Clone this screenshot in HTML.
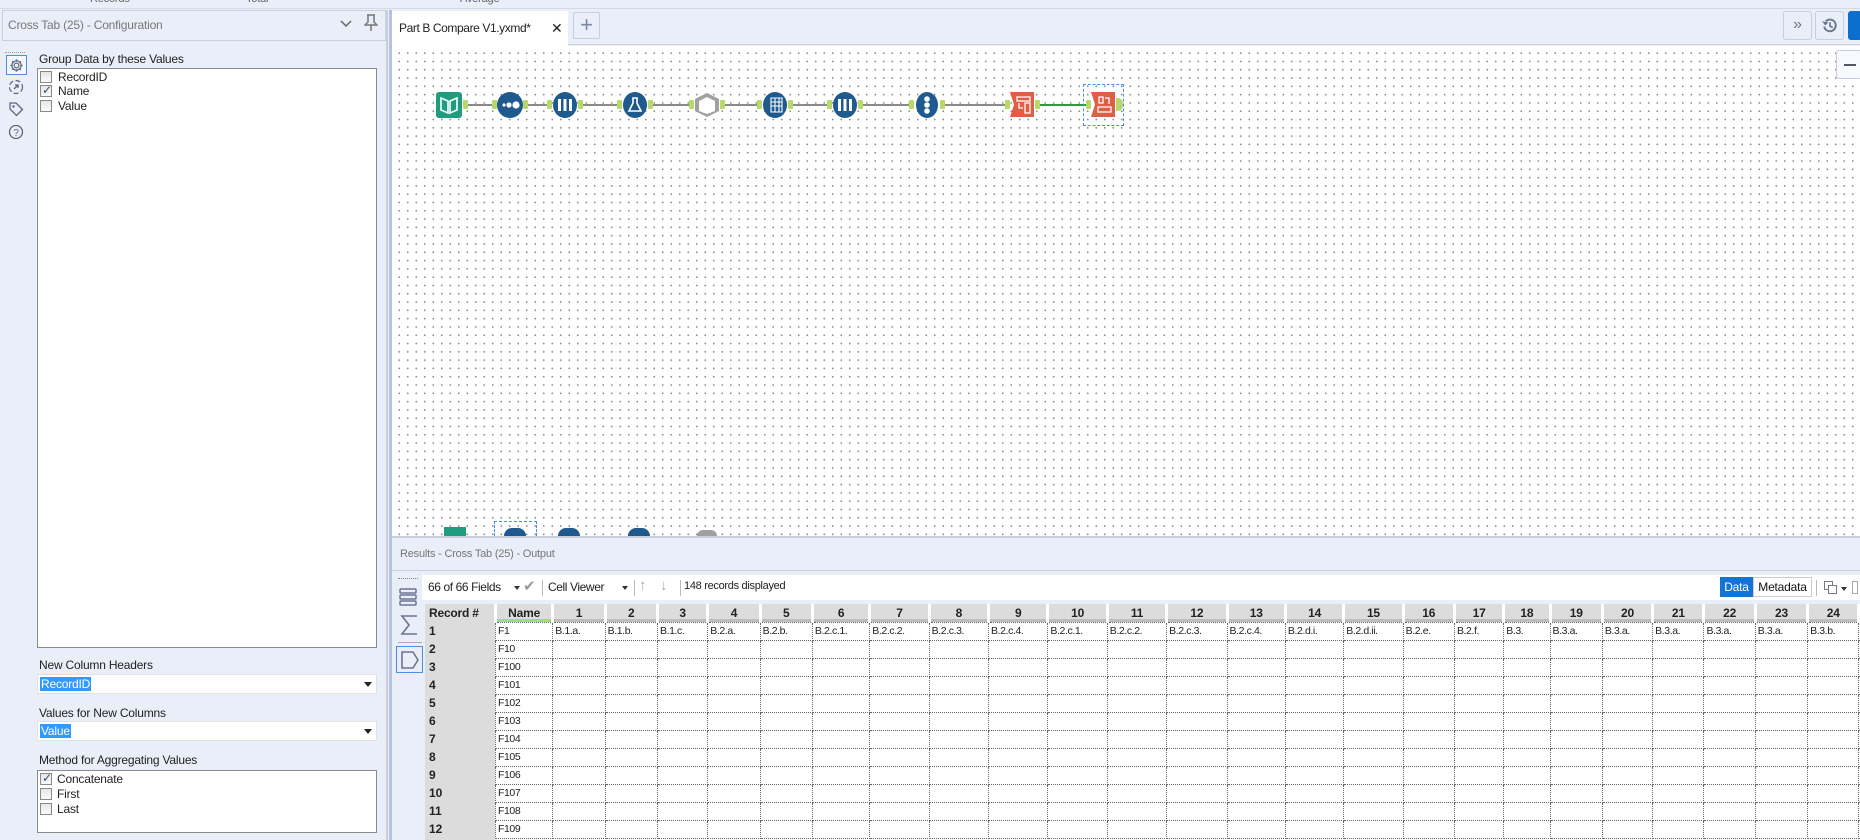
<!DOCTYPE html>
<html><head><meta charset="utf-8">
<style>
*{box-sizing:border-box;margin:0;padding:0}
body{width:1860px;height:840px;overflow:hidden;background:#eaeef8;font-family:"Liberation Sans",sans-serif;color:#222;position:relative;letter-spacing:-0.2px}
.abs{position:absolute}
.t{font-size:12px;white-space:nowrap}
.cb{position:absolute;width:12px;height:12px;border:1px solid #8a8a8a;background:linear-gradient(#e6e6e6,#fafafa)}
.cb.on::after{content:"✓";position:absolute;left:1px;top:-3px;font-size:12px;color:#3a4a8a}
.canvas{left:392px;top:46px;width:1468px;height:490px;background-color:#fff;background-image:radial-gradient(circle,#8c8c8c 0.7px,transparent 1.1px);background-size:8.5px 8.3px;background-position:3px 3px}
.tool{position:absolute;width:26px;height:26px}
.port{position:absolute;width:5px;height:9px;background:#b8d86a;border-radius:1px}
.line{position:absolute;height:2px;background:#8a8a8a}
table{border-collapse:collapse;table-layout:fixed;font-size:11px}
td{height:18px;border:1px dotted #666;padding:0 2px;white-space:nowrap;overflow:hidden;font-size:10.5px;letter-spacing:-0.4px}
th{height:18px;background:#dcdcdc;border-left:3px solid #fff;font-size:12px;font-weight:bold;box-shadow:inset 0 -3px 0 #bdbdbd;text-align:center}
th.nm{box-shadow:inset 0 -3px 0 #9fdc7a}
td.rn{background:#dcdcdc;border:none;font-weight:bold;font-size:12px;padding-left:4px;letter-spacing:0}
</style></head><body>
<!-- top strip -->
<div class="abs t" style="left:90px;top:-7px;color:#666;font-size:11px">Records</div>
<div class="abs t" style="left:246px;top:-7px;color:#666;font-size:11px">Total</div>
<div class="abs t" style="left:460px;top:-7px;color:#666;font-size:11px">Average</div>
<div class="abs" style="left:0;top:8px;width:1860px;height:1px;background:#d4d8e2"></div>

<!-- left panel -->
<div class="abs" style="left:2px;top:10px;width:384px;height:31px;border:1px solid #c9cfdc;background:#eaeef8"></div>
<div class="abs t" style="left:8px;top:18px;color:#777;font-size:12px">Cross Tab (25) - Configuration</div>
<svg class="abs" style="left:340px;top:19px" width="12" height="10"><path d="M1 2 L6 7 L11 2" fill="none" stroke="#666" stroke-width="1.5"/></svg>
<svg class="abs" style="left:364px;top:14px" width="14" height="18"><path d="M3 1H11M4 1V8L1 11H13L10 8V1M7 11V17" fill="none" stroke="#777" stroke-width="1.5"/></svg>
<div class="abs" style="left:386px;top:10px;width:2px;height:830px;background:#c9cfdc"></div>
<div class="abs" style="left:389px;top:10px;width:3px;height:830px;background:#b6c2e2"></div>
<!-- left icons -->
<div class="abs" style="left:5px;top:52px;width:20px;height:1px;border-top:1px dotted #999"></div>
<div class="abs" style="left:6px;top:55px;width:21px;height:20px;border:1px solid #4a90e2;background:#f4f7fd"></div>
<svg class="abs" style="left:9px;top:58px" width="15" height="15" viewBox="0 0 16 16"><circle cx="8" cy="8" r="2.5" fill="none" stroke="#5a6580" stroke-width="1.3"/><path d="M8 1.5V4M8 12V14.5M1.5 8H4M12 8H14.5M3.4 3.4L5.2 5.2M10.8 10.8L12.6 12.6M3.4 12.6L5.2 10.8M10.8 5.2L12.6 3.4" stroke="#5a6580" stroke-width="1.5"/><circle cx="8" cy="8" r="5" fill="none" stroke="#5a6580" stroke-width="1.2"/></svg>
<svg class="abs" style="left:8px;top:79px" width="16" height="16" viewBox="0 0 16 16"><circle cx="8" cy="8" r="6.5" fill="none" stroke="#5a6580" stroke-width="1.2" stroke-dasharray="5 2.5"/><path d="M6 10L10 6M7 6H10V9" fill="none" stroke="#5a6580" stroke-width="1.3"/></svg>
<svg class="abs" style="left:8px;top:101px" width="16" height="16" viewBox="0 0 16 16"><path d="M2 2H8L14.5 8.5L8.5 14.5L2 8Z" fill="none" stroke="#5a6580" stroke-width="1.3"/><circle cx="5.5" cy="5.5" r="1.2" fill="#5a6580"/></svg>
<svg class="abs" style="left:8px;top:124px" width="16" height="16" viewBox="0 0 16 16"><circle cx="8" cy="8" r="6.5" fill="none" stroke="#5a6580" stroke-width="1.3"/><text x="8" y="12" font-size="10" text-anchor="middle" fill="#5a6580" font-family="Liberation Sans">?</text></svg>

<div class="abs t" style="left:39px;top:52px">Group Data by these Values</div>
<div class="abs" style="left:37px;top:68px;width:340px;height:580px;border:1px solid #8a8a8a;background:#fff"></div>
<div class="cb" style="left:40px;top:71px"></div><div class="abs t" style="left:58px;top:70px">RecordID</div>
<div class="cb on" style="left:40px;top:85px"></div><div class="abs t" style="left:58px;top:84px">Name</div>
<div class="cb" style="left:40px;top:100px"></div><div class="abs t" style="left:58px;top:99px">Value</div>

<div class="abs t" style="left:39px;top:658px">New Column Headers</div>
<div class="abs" style="left:37px;top:674px;width:340px;height:20px;background:#fff;border:1px solid #e2e2e2"></div>
<div class="abs t" style="left:40px;top:677px;background:#3399ff;color:#fff;padding:0 1px">RecordID</div>
<div class="abs" style="left:364px;top:682px;border-left:4px solid transparent;border-right:4px solid transparent;border-top:5px solid #222"></div>
<div class="abs t" style="left:39px;top:706px">Values for New Columns</div>
<div class="abs" style="left:37px;top:721px;width:340px;height:20px;background:#fff;border:1px solid #e2e2e2"></div>
<div class="abs t" style="left:40px;top:724px;background:#3399ff;color:#fff;padding:0 1px">Value</div>
<div class="abs" style="left:364px;top:729px;border-left:4px solid transparent;border-right:4px solid transparent;border-top:5px solid #222"></div>
<div class="abs t" style="left:39px;top:753px">Method for Aggregating Values</div>
<div class="abs" style="left:37px;top:770px;width:340px;height:63px;border:1px solid #8a8a8a;background:#fff"></div>
<div class="cb on" style="left:40px;top:773px"></div><div class="abs t" style="left:57px;top:772px">Concatenate</div>
<div class="cb" style="left:40px;top:788px"></div><div class="abs t" style="left:57px;top:787px">First</div>
<div class="cb" style="left:40px;top:803px"></div><div class="abs t" style="left:57px;top:802px">Last</div>

<!-- tab bar -->
<div class="abs" style="left:392px;top:10px;width:1468px;height:35px;background:#eaeef8;border-bottom:1px solid #c9cfdc"></div>
<div class="abs" style="left:392px;top:11px;width:176px;height:35px;background:#fff"></div>
<div class="abs t" style="left:399px;top:21px;font-size:12px;letter-spacing:-0.4px">Part B Compare V1.yxmd*</div>
<div class="abs t" style="left:551px;top:20px;font-size:14px">✕</div>
<div class="abs" style="left:573px;top:12px;width:27px;height:27px;border:1px solid #c6cde0;border-radius:2px;text-align:center;color:#7a86a6;font-size:22px;line-height:24px">+</div>
<div class="abs" style="left:1783px;top:11px;width:29px;height:29px;border:1px solid #c6cde0;border-radius:3px;text-align:center;color:#6a7590;font-size:16px;line-height:26px">»</div>
<div class="abs" style="left:1815px;top:11px;width:29px;height:29px;border:1px solid #c6cde0;border-radius:3px"></div>
<svg class="abs" style="left:1821px;top:17px" width="17" height="17" viewBox="0 0 16 16"><path d="M3 9A5.5 5.5 0 1 0 4.5 4" fill="none" stroke="#6a7590" stroke-width="1.8"/><path d="M1 4L4 8L7 5" fill="#6a7590"/><path d="M8.5 5V8.5L11 10" fill="none" stroke="#6a7590" stroke-width="1.6"/></svg>
<div class="abs" style="left:1848px;top:11px;width:14px;height:29px;background:#0b6fd0;border-radius:3px"></div>

<!-- canvas -->
<div class="abs canvas"></div>
<div class="abs" style="left:1836px;top:50px;width:26px;height:29px;border:1px solid #c6cde0;border-radius:3px;background:#f7f9fd"></div>
<div class="abs" style="left:1844px;top:64px;width:12px;height:2px;background:#556"></div>

<!-- connections -->
<div class="line" style="left:468px;top:104px;width:32px"></div>
<div class="line" style="left:523px;top:104px;width:28px"></div>
<div class="line" style="left:580px;top:104px;width:42px"></div>
<div class="line" style="left:648px;top:104px;width:46px"></div>
<div class="line" style="left:720px;top:104px;width:42px"></div>
<div class="line" style="left:788px;top:104px;width:44px"></div>
<div class="line" style="left:858px;top:104px;width:56px"></div>
<div class="line" style="left:940px;top:104px;width:70px"></div>
<div class="line" style="left:1038px;top:104px;width:52px;background:#2e9a3c;height:2px"></div>

<!-- tools -->
<svg class="tool" style="left:436px;top:92px" viewBox="0 0 26 26"><rect width="26" height="26" rx="3" fill="#1f9d7e"/><path d="M5 6L12 9V21L5 18Z M21 6L14 9V21L21 18Z" fill="none" stroke="#fff" stroke-width="1.6"/></svg>
<svg class="tool" style="left:497px;top:92px" viewBox="0 0 26 26"><circle cx="13" cy="13" r="13" fill="#1e5a8e"/><circle cx="7" cy="13" r="1.6" fill="#fff"/><circle cx="12" cy="13" r="2.6" fill="#fff"/><circle cx="19" cy="13" r="3.6" fill="#fff"/></svg>
<svg class="tool" style="left:552px;top:92px" viewBox="0 0 26 26"><ellipse cx="13" cy="13" rx="12" ry="13" fill="#1e5a8e"/><rect x="6" y="7" width="3" height="12" fill="#fff"/><rect x="11.5" y="7" width="3" height="12" fill="#fff"/><rect x="17" y="7" width="3" height="12" fill="#fff"/></svg>
<svg class="tool" style="left:622px;top:92px" viewBox="0 0 26 26"><ellipse cx="13" cy="13" rx="12" ry="13" fill="#1e5a8e"/><path d="M11 6V11L7 19H19L15 11V6Z" fill="none" stroke="#fff" stroke-width="1.6"/></svg>
<svg class="tool" style="left:694px;top:92px" viewBox="0 0 26 26"><path d="M13 1L25 7V19L13 25L1 19V7Z" fill="#a0a0a0"/><path d="M13 5L21 9V19L13 22L5 19V9Z" fill="#fff"/></svg>
<svg class="tool" style="left:762px;top:92px" viewBox="0 0 26 26"><ellipse cx="13" cy="13" rx="12" ry="13" fill="#1e5a8e"/><path d="M9 6H20V20H9Z M9 10H20M9 14H20M13 6V20M17 6V20" fill="none" stroke="#fff" stroke-width="1.1"/></svg>
<svg class="tool" style="left:832px;top:92px" viewBox="0 0 26 26"><ellipse cx="13" cy="13" rx="12" ry="13" fill="#1e5a8e"/><rect x="6" y="7" width="3" height="12" fill="#fff"/><rect x="11.5" y="7" width="3" height="12" fill="#fff"/><rect x="17" y="7" width="3" height="12" fill="#fff"/></svg>
<svg class="tool" style="left:914px;top:92px" viewBox="0 0 26 26"><ellipse cx="13" cy="13" rx="11" ry="13" fill="#1e5a8e"/><circle cx="13" cy="7" r="2.8" fill="#fff"/><circle cx="13" cy="13" r="2.8" fill="#fff"/><circle cx="13" cy="19" r="2.8" fill="#fff"/></svg>
<svg class="tool" style="left:1010px;top:92px;width:24px;height:25px" viewBox="0 0 24 25"><path d="M0 0H24V25H0L4 12.5Z" fill="#df5f46"/><path d="M7 5H20V9H7ZM15 11H20V21H15ZM9 11V16H13" fill="none" stroke="#fff" stroke-width="1.3"/></svg>
<div class="abs" style="left:1083px;top:84px;width:41px;height:42px;border:1px dashed #4a90e2"></div>
<svg class="tool" style="left:1091px;top:92px;width:24px;height:25px" viewBox="0 0 24 25"><path d="M0 0H24V25H0L4 12.5Z" fill="#df5f46"/><path d="M8 5H12V11H8ZM14 6H18V12M7 15H20V20H7Z" fill="none" stroke="#fff" stroke-width="1.3"/></svg>
<!-- ports -->
<div class="port" style="left:463px;top:100px"></div><div class="port" style="left:492px;top:100px"></div>
<div class="port" style="left:523px;top:100px"></div><div class="port" style="left:547px;top:100px"></div>
<div class="port" style="left:578px;top:100px"></div><div class="port" style="left:617px;top:100px"></div>
<div class="port" style="left:648px;top:100px"></div><div class="port" style="left:689px;top:100px"></div>
<div class="port" style="left:720px;top:100px"></div><div class="port" style="left:757px;top:100px"></div>
<div class="port" style="left:788px;top:100px"></div><div class="port" style="left:827px;top:100px"></div>
<div class="port" style="left:858px;top:100px"></div><div class="port" style="left:909px;top:100px"></div>
<div class="port" style="left:940px;top:100px"></div><div class="port" style="left:1005px;top:100px"></div>
<div class="port" style="left:1035px;top:100px"></div><div class="port" style="left:1086px;top:100px"></div>
<div class="port" style="left:1116px;top:98px;width:7px;height:13px;border-radius:0 5px 5px 0"></div>
<!-- bottom cut tools -->
<div class="abs" style="left:444px;top:527px;width:22px;height:9px;background:#1f9d7e"></div>
<div class="abs" style="left:494px;top:521px;width:43px;height:15px;border:1px dashed #4a90e2;border-bottom:none"></div>
<div class="abs" style="left:504px;top:528px;width:22px;height:16px;border-radius:11px;background:#1e5a8e"></div>
<div class="abs" style="left:558px;top:528px;width:22px;height:16px;border-radius:11px;background:#1e5a8e"></div>
<div class="abs" style="left:628px;top:528px;width:22px;height:16px;border-radius:11px;background:#1e5a8e"></div>
<div class="abs" style="left:697px;top:530px;width:20px;height:12px;border-radius:10px;background:#a0a0a0"></div>

<!-- results panel -->
<div class="abs" style="left:392px;top:536px;width:1468px;height:304px;background:#eaeef8;border-top:2px solid #c9cfdc"></div>
<div class="abs" style="left:392px;top:538px;width:1468px;height:33px;border-bottom:1px solid #c9cfdc"></div>
<div class="abs t" style="left:400px;top:548px;color:#777;font-size:11px">Results - Cross Tab (25) - Output</div>
<div class="abs" style="left:422px;top:575px;width:1438px;height:25px;background:#fff"></div>
<div class="abs t" style="left:428px;top:580px;font-size:12px;letter-spacing:-0.4px">66 of 66 Fields</div>
<div class="abs" style="left:514px;top:586px;border-left:3px solid transparent;border-right:3px solid transparent;border-top:4px solid #333"></div>
<div class="abs t" style="left:523px;top:577px;font-size:15px;color:#999">✔</div>
<div class="abs" style="left:542px;top:580px;width:1px;height:16px;background:#bbb"></div>
<div class="abs t" style="left:548px;top:580px;font-size:12px;letter-spacing:-0.4px">Cell Viewer</div>
<div class="abs" style="left:622px;top:586px;border-left:3px solid transparent;border-right:3px solid transparent;border-top:4px solid #333"></div>
<div class="abs" style="left:634px;top:580px;width:1px;height:16px;background:#bbb"></div>
<div class="abs t" style="left:639px;top:577px;font-size:15px;color:#aaa">↑</div>
<div class="abs t" style="left:660px;top:577px;font-size:15px;color:#aaa">↓</div>
<div class="abs" style="left:680px;top:580px;width:1px;height:16px;background:#bbb"></div>
<div class="abs t" style="left:684px;top:580px;font-size:11px;letter-spacing:-0.3px">148 records displayed</div>
<div class="abs t" style="left:1720px;top:577px;width:33px;height:20px;background:#1474d4;color:#fff;font-size:12px;text-align:center;line-height:20px">Data</div>
<div class="abs t" style="left:1753px;top:577px;width:59px;height:20px;border:1px solid #ccd;color:#111;font-size:12px;text-align:center;line-height:18px">Metadata</div>
<div class="abs" style="left:1816px;top:580px;width:1px;height:16px;background:#bbb"></div>
<div class="abs" style="left:1824px;top:581px;width:9px;height:9px;border:1.5px solid #778"></div>
<div class="abs" style="left:1828px;top:585px;width:9px;height:9px;border:1.5px solid #778;background:#fff"></div>
<div class="abs" style="left:1841px;top:587px;border-left:3px solid transparent;border-right:3px solid transparent;border-top:4px solid #333"></div>
<div class="abs" style="left:1852px;top:581px;width:6px;height:13px;border:1.5px solid #aaa"></div>
<!-- side mini icons -->
<div class="abs" style="left:398px;top:578px;width:20px;border-top:1px dotted #888"></div>
<svg class="abs" style="left:399px;top:588px" width="18" height="18"><rect x="1" y="1" width="16" height="4" rx="1" fill="none" stroke="#6a7590" stroke-width="1.5"/><rect x="1" y="7" width="16" height="4" rx="1" fill="none" stroke="#6a7590" stroke-width="1.5"/><rect x="1" y="13" width="16" height="4" rx="1" fill="none" stroke="#6a7590" stroke-width="1.5"/></svg>
<svg class="abs" style="left:400px;top:615px" width="18" height="20"><path d="M17 1H2L9 10L2 19H17" fill="none" stroke="#6a7590" stroke-width="1.6"/></svg>
<div class="abs" style="left:398px;top:642px;width:24px;border-top:1px solid #aab"></div>
<div class="abs" style="left:396px;top:646px;width:27px;height:27px;border:1px solid #4a90e2"></div>
<svg class="abs" style="left:400px;top:650px" width="20" height="20"><path d="M2 2H13L18 10L13 18H2Z" fill="none" stroke="#6a7590" stroke-width="1.6"/></svg>

<!-- grid -->
<div class="abs" style="left:425px;top:604px;width:1435px;height:236px;background:#fff"></div>
<div class="abs" style="left:425px;top:604px;width:70px;height:236px;background:#dcdcdc"></div>
<table class="abs" style="left:425px;top:604px;width:1490px">
<colgroup><col style="width:70px"><col style="width:57px"><col style="width:52px"><col style="width:52px"><col style="width:50px"><col style="width:52px"><col style="width:52px"><col style="width:57px"><col style="width:59px"><col style="width:59px"><col style="width:59px"><col style="width:59px"><col style="width:59px"><col style="width:60px"><col style="width:58px"><col style="width:58px"><col style="width:59px"><col style="width:51px"><col style="width:49px"><col style="width:46px"><col style="width:52px"><col style="width:50px"><col style="width:51px"><col style="width:51px"><col style="width:52px"><col style="width:51px"><col style="width:55px"></colgroup>
<tr><th style="background:#dcdcdc;box-shadow:none;border:none;text-align:left;padding-left:4px">Record #</th><th class="nm">Name</th><th>1</th><th>2</th><th>3</th><th>4</th><th>5</th><th>6</th><th>7</th><th>8</th><th>9</th><th>10</th><th>11</th><th>12</th><th>13</th><th>14</th><th>15</th><th>16</th><th>17</th><th>18</th><th>19</th><th>20</th><th>21</th><th>22</th><th>23</th><th>24</th><th>25</th></tr>
<tr><td class="rn">1</td><td>F1</td><td>B.1.a.</td><td>B.1.b.</td><td>B.1.c.</td><td>B.2.a.</td><td>B.2.b.</td><td>B.2.c.1.</td><td>B.2.c.2.</td><td>B.2.c.3.</td><td>B.2.c.4.</td><td>B.2.c.1.</td><td>B.2.c.2.</td><td>B.2.c.3.</td><td>B.2.c.4.</td><td>B.2.d.i.</td><td>B.2.d.ii.</td><td>B.2.e.</td><td>B.2.f.</td><td>B.3.</td><td>B.3.a.</td><td>B.3.a.</td><td>B.3.a.</td><td>B.3.a.</td><td>B.3.a.</td><td>B.3.b.</td><td>B.3.b.</td></tr>
<tr><td class="rn">2</td><td>F10</td><td></td><td></td><td></td><td></td><td></td><td></td><td></td><td></td><td></td><td></td><td></td><td></td><td></td><td></td><td></td><td></td><td></td><td></td><td></td><td></td><td></td><td></td><td></td><td></td><td></td></tr>
<tr><td class="rn">3</td><td>F100</td><td></td><td></td><td></td><td></td><td></td><td></td><td></td><td></td><td></td><td></td><td></td><td></td><td></td><td></td><td></td><td></td><td></td><td></td><td></td><td></td><td></td><td></td><td></td><td></td><td></td></tr>
<tr><td class="rn">4</td><td>F101</td><td></td><td></td><td></td><td></td><td></td><td></td><td></td><td></td><td></td><td></td><td></td><td></td><td></td><td></td><td></td><td></td><td></td><td></td><td></td><td></td><td></td><td></td><td></td><td></td><td></td></tr>
<tr><td class="rn">5</td><td>F102</td><td></td><td></td><td></td><td></td><td></td><td></td><td></td><td></td><td></td><td></td><td></td><td></td><td></td><td></td><td></td><td></td><td></td><td></td><td></td><td></td><td></td><td></td><td></td><td></td><td></td></tr>
<tr><td class="rn">6</td><td>F103</td><td></td><td></td><td></td><td></td><td></td><td></td><td></td><td></td><td></td><td></td><td></td><td></td><td></td><td></td><td></td><td></td><td></td><td></td><td></td><td></td><td></td><td></td><td></td><td></td><td></td></tr>
<tr><td class="rn">7</td><td>F104</td><td></td><td></td><td></td><td></td><td></td><td></td><td></td><td></td><td></td><td></td><td></td><td></td><td></td><td></td><td></td><td></td><td></td><td></td><td></td><td></td><td></td><td></td><td></td><td></td><td></td></tr>
<tr><td class="rn">8</td><td>F105</td><td></td><td></td><td></td><td></td><td></td><td></td><td></td><td></td><td></td><td></td><td></td><td></td><td></td><td></td><td></td><td></td><td></td><td></td><td></td><td></td><td></td><td></td><td></td><td></td><td></td></tr>
<tr><td class="rn">9</td><td>F106</td><td></td><td></td><td></td><td></td><td></td><td></td><td></td><td></td><td></td><td></td><td></td><td></td><td></td><td></td><td></td><td></td><td></td><td></td><td></td><td></td><td></td><td></td><td></td><td></td><td></td></tr>
<tr><td class="rn">10</td><td>F107</td><td></td><td></td><td></td><td></td><td></td><td></td><td></td><td></td><td></td><td></td><td></td><td></td><td></td><td></td><td></td><td></td><td></td><td></td><td></td><td></td><td></td><td></td><td></td><td></td><td></td></tr>
<tr><td class="rn">11</td><td>F108</td><td></td><td></td><td></td><td></td><td></td><td></td><td></td><td></td><td></td><td></td><td></td><td></td><td></td><td></td><td></td><td></td><td></td><td></td><td></td><td></td><td></td><td></td><td></td><td></td><td></td></tr>
<tr><td class="rn">12</td><td>F109</td><td></td><td></td><td></td><td></td><td></td><td></td><td></td><td></td><td></td><td></td><td></td><td></td><td></td><td></td><td></td><td></td><td></td><td></td><td></td><td></td><td></td><td></td><td></td><td></td><td></td></tr>
</table>
</body></html>
